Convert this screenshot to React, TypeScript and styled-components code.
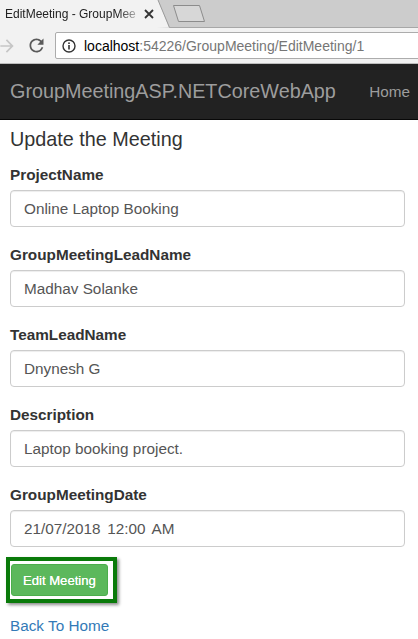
import React from 'react'
import styled, { createGlobalStyle } from 'styled-components'

const GlobalStyle = createGlobalStyle`
  html, body {
    margin: 0;
    padding: 0;
    background: #fff;
    overflow: hidden;
  }
  body {
    font-family: "Liberation Sans", Arial, sans-serif;
    color: #333;
  }
  * { box-sizing: border-box; }
`

// browser chrome: tab strip
const TabStrip = styled.div`
  display: flex;
  height: 28px;
  background: #cccccc;
`

const ActiveTab = styled.div`
  display: flex;
  align-items: center;
  width: 157px;
  padding-left: 5px;
  background: #f2f2f2;
`

const TabTitle = styled.span`
  flex: 1;
  white-space: nowrap;
  font-size: 12px;
  color: #222;
  -webkit-mask-image: linear-gradient(to right, #000 84%, rgba(0, 0, 0, 0.15));
  mask-image: linear-gradient(to right, #000 84%, rgba(0, 0, 0, 0.15));
`

const TabClose = styled.svg`
  flex: none;
  margin: 0 3px 0 4px;
`

const TabRest = styled.div`
  flex: 1;
  display: flex;
  align-items: flex-start;
  border-bottom: 1px solid #a7a7a7;
`

// browser chrome: toolbar and omnibox
const Toolbar = styled.div`
  display: flex;
  align-items: center;
  height: 36px;
  background: #f2f2f2;
  border-bottom: 1px solid #bdbdbd;
  overflow: hidden;
`

const ToolIcon = styled.svg<{ $left: number }>`
  flex: none;
  margin-left: ${p => p.$left}px;
`

const Omnibox = styled.div`
  flex: 1;
  display: flex;
  align-items: center;
  height: 27px;
  margin: 0 -10px 0 8px;
  padding-left: 6px;
  background: #fff;
  border: 1px solid #acacac;
  border-radius: 2px;
  font-size: 14px;
  white-space: nowrap;
`

const Host = styled.span`
  margin-left: 8px;
  color: #000;
`

const UrlPath = styled.span`
  color: #767676;
`

// site navbar
const Navbar = styled.nav`
  display: flex;
  align-items: center;
  justify-content: space-between;
  height: 56px;
  padding: 0 8px 0 10px;
  background: #222;
  border-bottom: 1px solid #080808;
`

const Brand = styled.a`
  font-size: 19.8px;
  color: #9d9d9d;
  text-decoration: none;
`

const NavLink = styled.a`
  font-size: 15.3px;
  color: #9d9d9d;
  text-decoration: none;
`

// page body
const Page = styled.main`
  padding: 0 10px;
`

const Heading = styled.h4`
  margin: 8px 0 14px;
  font-size: 19.8px;
  font-weight: 500;
  line-height: 22px;
  color: #333;
`

const FormGroup = styled.div`
  margin-bottom: 17px;
`

const Label = styled.label`
  display: block;
  margin-bottom: 4px;
  font-size: 15.3px;
  font-weight: bold;
  line-height: 22px;
  color: #333;
`

const Input = styled.input<{ $spaced?: boolean }>`
  display: block;
  width: 395px;
  height: 37px;
  padding: 0 13px;
  font-family: "Liberation Sans", Arial, sans-serif;
  font-size: 15.3px;
  word-spacing: ${p => (p.$spaced ? '2.5px' : 'normal')};
  color: #555;
  background: #fff;
  border: 1px solid #ccc;
  border-radius: 4px;
  box-shadow: inset 0 1px 1px rgba(0, 0, 0, 0.075);
  outline: none;
`

const Highlight = styled.span`
  display: inline-block;
  margin: -7px 0 0 -4px;
  padding: 3px 5px 3px 1px;
  border: 4px solid #0a7a0a;
  box-shadow: 2px 2px 3px rgba(0, 0, 0, 0.45);
`

const SubmitButton = styled.button`
  display: block;
  height: 32px;
  padding: 0 11px;
  font-family: "Liberation Sans", Arial, sans-serif;
  font-size: 13.1px;
  color: #fff;
  text-shadow: 0 0 0.6px #fff;
  background: #5cb85c;
  border: 1px solid #4cae4c;
  border-radius: 3px;
  cursor: pointer;
`

const BackLink = styled.a`
  display: block;
  margin-top: 12px;
  font-size: 15.3px;
  line-height: 22px;
  color: #337ab7;
  text-decoration: none;
`

const fields = [
  { label: 'ProjectName', value: 'Online Laptop Booking' },
  { label: 'GroupMeetingLeadName', value: 'Madhav Solanke' },
  { label: 'TeamLeadName', value: 'Dnynesh G' },
  { label: 'Description', value: 'Laptop booking project.' },
  { label: 'GroupMeetingDate', value: '21/07/2018 12:00 AM', spaced: true },
]

const BrowserChrome = () => (
  <>
    <TabStrip>
      <ActiveTab>
        <TabTitle>EditMeeting - GroupMee</TabTitle>
        <TabClose width="10" height="10" viewBox="0 0 10 10">
          <path d="M1 1L9 9M9 1L1 9" stroke="#333" strokeWidth="1.8" />
        </TabClose>
      </ActiveTab>
      <svg width="14" height="28" viewBox="0 0 14 28">
        <polygon points="0,0 1,0 12,27.5 0,28" fill="#f2f2f2" />
        <line x1="1" y1="0" x2="12.5" y2="27.5" stroke="#9a9a9a" strokeWidth="1" />
        <line x1="12.5" y1="27.5" x2="14" y2="27.5" stroke="#a7a7a7" strokeWidth="1" />
      </svg>
      <TabRest>
        <svg width="40" height="24" viewBox="0 0 40 24">
          <path
            d="M2.5 5.5 H28.5 L33.5 21.5 H7.5 Z"
            fill="#d7d7d7"
            stroke="#8c8c8c"
            strokeWidth="1"
            strokeLinejoin="round"
          />
        </svg>
      </TabRest>
    </TabStrip>
    <Toolbar>
      <ToolIcon $left={-3} width="20" height="20" viewBox="0 0 24 24">
        <path d="M12 4l-1.41 1.41L16.17 11H4v2h12.17l-5.58 5.59L12 20l8-8z" fill="#c6c6c6" />
      </ToolIcon>
      <ToolIcon $left={9} width="21" height="21" viewBox="0 0 24 24">
        <path
          d="M17.65 6.35A7.958 7.958 0 0012 4c-4.42 0-7.99 3.58-7.99 8s3.57 8 7.99 8c3.73 0 6.84-2.55 7.73-6h-2.08A5.99 5.99 0 0112 18c-3.31 0-6-2.690-6-6s2.69-6 6-6c1.66 0 3.14.69 4.22 1.78L13 11h7V4l-2.35 2.35z"
          fill="#5a5a5a"
        />
      </ToolIcon>
      <Omnibox>
        <svg width="14" height="14" viewBox="0 0 14 14">
          <circle cx="7" cy="7" r="6" fill="none" stroke="#333" strokeWidth="1.4" />
          <rect x="6.2" y="6" width="1.6" height="4.5" fill="#333" />
          <rect x="6.2" y="3.4" width="1.6" height="1.6" fill="#333" />
        </svg>
        <Host>localhost</Host>
        <UrlPath>:54226/GroupMeeting/EditMeeting/1</UrlPath>
      </Omnibox>
    </Toolbar>
  </>
)

export default function App() {
  return (
    <>
      <GlobalStyle />
      <BrowserChrome />
      <Navbar>
        <Brand href="#">GroupMeetingASP.NETCoreWebApp</Brand>
        <NavLink href="#">Home</NavLink>
      </Navbar>
      <Page>
        <Heading>Update the Meeting</Heading>
        <form onSubmit={e => e.preventDefault()}>
          {fields.map(f => (
            <FormGroup key={f.label}>
              <Label>{f.label}</Label>
              <Input readOnly value={f.value} $spaced={f.spaced} />
            </FormGroup>
          ))}
          <Highlight>
            <SubmitButton type="submit">Edit Meeting</SubmitButton>
          </Highlight>
        </form>
        <BackLink href="#">Back To Home</BackLink>
      </Page>
    </>
  )
}
